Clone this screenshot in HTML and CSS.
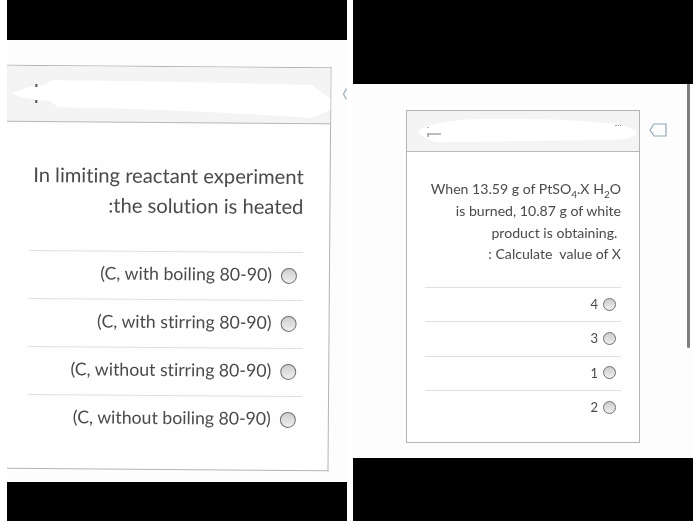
FILE: index.html
```html
<!DOCTYPE html>
<html lang="en">
<head>
    <meta charset="UTF-8">
    <meta name="viewport" content="width=device-width, initial-scale=1.0">
    <title>Quiz questions</title>
    <link rel="stylesheet" href="styles.css">
</head>
<body>
    <main class="page">

    <section class="panel panel-left">
        <div class="black-bar bar-top"></div>
        <div class="quiz-card">
            <div class="card-head">
                <svg class="smudge" viewBox="0 0 327 55" preserveAspectRatio="none">
                    <path d="M7 28 Q20 21 40 19 L47 14 Q170 14 309 17 Q318 26 333 33 L333 39 L308 50 Q180 42 54 41 L46 35 Q24 34 7 28 Z" fill="#fff"/>
                </svg>
                <span class="speck speck-a"></span>
                <span class="speck speck-b"></span>
            </div>
            <div class="card-body">
                <p class="question">In limiting reactant experiment<br>:the solution is heated</p>
                <ul class="answers">
                    <li><span>(C, with boiling 80-90)</span><i class="radio"></i></li>
                    <li><span>(C, with stirring 80-90)</span><i class="radio"></i></li>
                    <li><span>(C, without stirring 80-90)</span><i class="radio"></i></li>
                    <li><span>(C, without boiling 80-90)</span><i class="radio"></i></li>
                </ul>
            </div>
        </div>
        <svg class="chevron" viewBox="0 0 6 14"><path d="M4.5 1.5 L1.5 7 L4.5 12.5" fill="none" stroke="#a9bac2" stroke-width="1.5"/></svg>
        <div class="black-bar bar-bottom"></div>
    </section>

    <section class="panel panel-right">
        <div class="black-bar bar-top"></div>
        <div class="quiz-card">
            <div class="card-head">
                <svg class="smudge" viewBox="0 0 234 41" preserveAspectRatio="none">
                    <path d="M11 20 Q30 9 80 8 Q160 7 214 14 Q232 18 231 24 Q228 30 190 30 L30 32 Q14 28 11 20 Z" fill="#fff"/>
                </svg>
                <svg class="arrow-mark" viewBox="0 0 16 14"><path d="M1 10 H15 M2 10 V13 M2 3 V4" fill="none" stroke="#777" stroke-width="1"/></svg>
                <span class="dots"></span>
            </div>
            <div class="card-body">
                <p class="question">When 13.59 g of PtSO<sub>4</sub>.X H<sub>2</sub>O<br>is burned, 10.87 g of white<br>product is obtaining.&nbsp;<br>: Calculate&nbsp; value of X</p>
                <ul class="answers">
                    <li><span>4</span><i class="radio"></i></li>
                    <li><span>3</span><i class="radio"></i></li>
                    <li><span>1</span><i class="radio"></i></li>
                    <li><span>2</span><i class="radio"></i></li>
                </ul>
            </div>
        </div>
        <svg class="flag" viewBox="0 0 18 14"><path d="M5 1 H17 V13 H5 L1 7 Z" fill="none" stroke="#8fa9b5" stroke-width="1.2"/></svg>
        <div class="scroll-thumb"></div>
        <div class="black-bar bar-bottom"></div>
    </section>

    </main>
</body>
</html>
```

FILE: styles.css
```css
html, body {
    margin: 0;
    padding: 0;
    background: #fff;
}
body {
    width: 700px;
    height: 521px;
    overflow: hidden;
    font-family: Lato, "Open Sans", sans-serif;
    font-variant-ligatures: none;
    color: #4a4a4a;
}
/* the source is a soft photo of a screen */
.page {
    display: flex;
    gap: 6px;
    padding-left: 7px;
    height: 521px;
    filter: blur(0.3px);
}
.panel {
    position: relative;
    width: 340px;
    height: 521px;
    display: flex;
    flex-direction: column;
    background: #fdfdfd;
    overflow: hidden;
}
.black-bar {
    background: #000;
    flex: none;
}
.panel-left .bar-top { height: 40px; }
.panel-left .bar-bottom { height: 39px; margin-top: 12px; }
.panel-right .bar-top { height: 84px; }
.panel-right .bar-bottom { height: 63px; margin-top: 15px; }

.quiz-card {
    display: flex;
    flex-direction: column;
    flex: none;
    border: 1px solid #b4b4b4;
    background: #fefefe;
    box-sizing: border-box;
}
/* the left photo sits a little crooked */
.panel-left .quiz-card {
    width: 327px;
    height: 404px;
    margin: 26px 0 0 -4px;
    border-left: none;
    transform: rotate(0.43deg);
}
.panel-right .quiz-card {
    width: 234px;
    height: 333px;
    margin: 26px 0 0 53px;
}
.card-head {
    position: relative;
    background: #f4f4f4;
    border-bottom: 1px solid #b8b8b8;
    flex: none;
}
.panel-left .card-head { height: 55px; }
.panel-right .card-head { height: 40px; }
.smudge {
    position: absolute;
    left: 0;
    top: 0;
    width: 100%;
    height: 100%;
}
.speck {
    position: absolute;
    left: 31px;
    width: 2px;
    height: 3px;
    background: #555;
}
.speck-a { top: 18px; }
.speck-b { top: 34px; }
.arrow-mark {
    position: absolute;
    left: 19px;
    top: 13px;
    width: 16px;
    height: 14px;
}
.dots {
    position: absolute;
    left: 208px;
    top: 14px;
    width: 6px;
    border-top: 1px dotted #999;
}

.card-body {
    display: flex;
    flex-direction: column;
}
.question {
    margin: 0;
    text-align: right;
}
.panel-left .card-body { padding: 37px 26px 0 26px; }
.panel-left .question {
    font-size: 20.2px;
    line-height: 30px;
    padding-bottom: 31px;
}
.panel-right .card-body { padding: 26px 18px 0 18px; }
.panel-right .question {
    font-size: 14.1px;
    line-height: 21.8px;
    padding-bottom: 21.8px;
}
sub {
    font-size: 10px;
    line-height: 0;
}

.answers {
    list-style: none;
    margin: 0;
    padding: 0;
}
.answers li {
    display: flex;
    align-items: center;
    justify-content: flex-end;
    border-top: 1px solid #e0e0e0;
}
.panel-left .answers li {
    height: 45px;
    gap: 9px;
    font-size: 17.7px;
    padding-right: 6px;
    padding-bottom: 2px;
}
.panel-left .answers span { padding-bottom: 3px; }
.panel-right .answers li {
    height: 32.3px;
    gap: 5px;
    font-size: 13px;
    padding-right: 5px;
    padding-bottom: 1px;
}
.radio {
    flex: none;
    box-sizing: border-box;
    border-radius: 50%;
    border: 1px solid #6e6e6e;
    background: linear-gradient(#cdcdcd, #efefef);
}
.panel-left .radio { width: 16px; height: 16px; }
.panel-right .radio { width: 13px; height: 13px; }

.chevron {
    position: absolute;
    left: 335px;
    top: 87px;
    width: 6px;
    height: 14px;
}
.flag {
    position: absolute;
    left: 296px;
    top: 123px;
    width: 18px;
    height: 14px;
}
.scroll-thumb {
    position: absolute;
    left: 334px;
    top: 84px;
    width: 3px;
    height: 264px;
    background: #7d7d7d;
    border-radius: 0 0 2px 2px;
}
```
